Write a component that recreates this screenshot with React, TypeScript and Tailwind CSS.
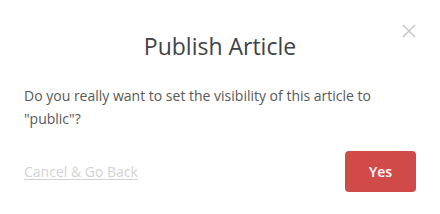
export default function App() {
  return (
    <div className="h-[214px] w-[440px] bg-white font-['Open_Sans',sans-serif]">
      <div className="flex justify-end pr-[24px] pt-[24px]">
        <svg width="14" height="14" viewBox="0 0 14 14" className="text-[#c7c7c7]">
          <path d="M1 1L13 13M13 1L1 13" stroke="currentColor" strokeWidth="1.5" />
        </svg>
      </div>
      <h1 className="-mt-[6px] text-center text-[23px] leading-[28px] text-[#3f4247]">Publish Article</h1>
      <p className="mt-[24px] px-6 text-[14px] leading-[23px] text-[#585858]">
        Do you really want to set the visibility of this article to "public"?
      </p>
      <div className="mt-[21px] flex items-center justify-between pl-6 pr-6">
        <span className="text-[14px] text-[#d2d2d2] underline underline-offset-2">Cancel &amp; Go Back</span>
        <button className="h-[41px] w-[71px] rounded-[4px] bg-[#d14a4a] text-[14px] font-semibold text-white">
          Yes
        </button>
      </div>
    </div>
  )
}
